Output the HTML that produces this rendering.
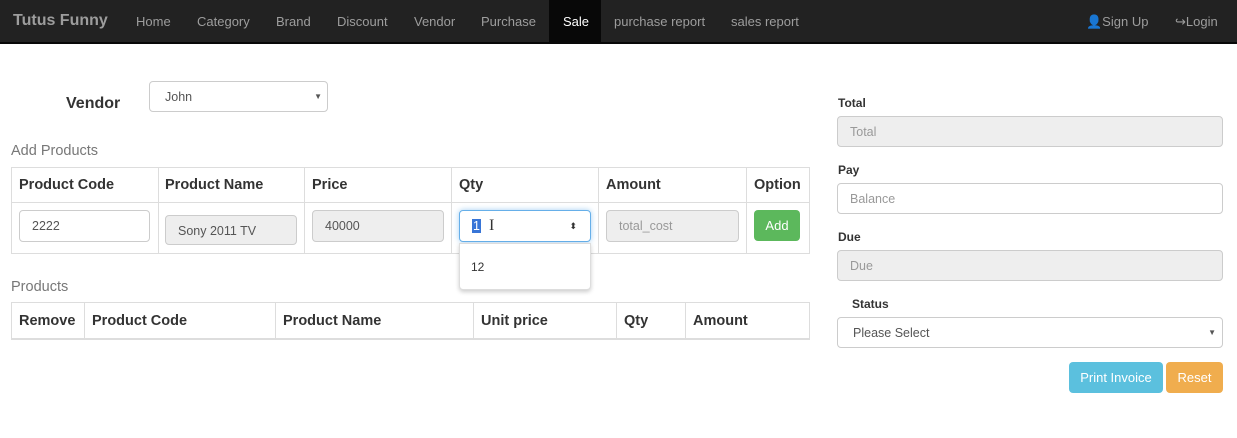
<!DOCTYPE html><html><head><style>
*{box-sizing:border-box;margin:0;padding:0}
body{width:1237px;height:438px;background:#fff;font-family:"Liberation Sans",sans-serif;font-size:13px;color:#333;position:relative;overflow:hidden}
.a{position:absolute}
.nav{left:0;top:0;width:1237px;height:44px;background:#222;border-bottom:2px solid #080808}
.nav span{position:absolute;top:14px;color:#9d9d9d;font-size:13px}
.in{position:absolute;height:32px;border:1px solid #ccc;border-radius:4px;background:#fff;padding:0 12px;line-height:30px;font-size:12.5px;color:#555}
.dis{background:#eee;color:#777}
.ph{color:#999}
.b{font-weight:bold;font-size:14.5px;color:#333}
.lbl{font-weight:bold;font-size:12px;color:#333}
.line{position:absolute;background:#ddd}
</style></head><body>
<div class="a nav">
<span style="left:13px;top:12px;font-size:16px;font-weight:bold;color:#9d9d9d">Tutus Funny</span>
<span style="left:136px">Home</span><span style="left:197px">Category</span><span style="left:276px">Brand</span><span style="left:337px">Discount</span><span style="left:414px">Vendor</span><span style="left:481px">Purchase</span>
<div class="a" style="left:549px;top:0;width:52px;height:42px;background:#080808"></div>
<span style="left:563px;color:#fff">Sale</span><span style="left:614px">purchase report</span><span style="left:731px">sales report</span>
<span style="left:1086px">&#128100;Sign Up</span><span style="left:1175px">&#8618;Login</span>
</div>
<div class="a" style="left:66px;top:95px;font-size:16px;font-weight:bold">Vendor</div>
<div class="in" style="left:149px;top:81px;width:179px;height:31px;padding-left:15px">John<span style="position:absolute;right:5px;font-size:8px">▼</span></div>
<div class="a" style="left:11px;top:143px;font-size:14.5px;color:#777">Add Products</div>
<div class="a" style="left:11px;top:167px;width:799px;height:87px;border:1px solid #ddd"></div>
<div class="line" style="left:11px;top:202px;width:799px;height:1px"></div>
<div class="line" style="left:158px;top:167px;width:1px;height:87px"></div>
<div class="line" style="left:304px;top:167px;width:1px;height:87px"></div>
<div class="line" style="left:451px;top:167px;width:1px;height:87px"></div>
<div class="line" style="left:598px;top:167px;width:1px;height:87px"></div>
<div class="line" style="left:746px;top:167px;width:1px;height:87px"></div>
<div class="a b" style="left:19px;top:177px">Product Code</div>
<div class="a b" style="left:165px;top:177px">Product Name</div>
<div class="a b" style="left:312px;top:177px">Price</div>
<div class="a b" style="left:459px;top:177px">Qty</div>
<div class="a b" style="left:606px;top:177px">Amount</div>
<div class="a b" style="left:754px;top:177px">Option</div>
<div class="in" style="left:19px;top:210px;width:131px">2222</div>
<div class="in dis" style="left:165px;top:215px;width:132px;height:30px;color:#555">Sony 2011 TV</div>
<div class="in dis" style="left:312px;top:210px;width:132px;color:#555">40000</div>
<div class="in" style="left:459px;top:210px;width:132px;border-color:#66afe9;box-shadow:0 0 6px rgba(102,175,233,.6)"><span style="background:#3875d7;color:#fff;padding:0 1px">1</span><span style="position:absolute;left:29px;color:#333;font-family:'Liberation Serif',serif;font-size:16px">I</span><span style="position:absolute;right:13px;font-size:9px;color:#333">⬍</span></div>
<div class="in dis ph" style="left:606px;top:210px;width:133px">total_cost</div>
<div class="a" style="left:754px;top:210px;width:46px;height:31px;background:#5cb85c;border-radius:4px;color:#fff;text-align:center;line-height:31px">Add</div>
<div class="a" style="left:459px;top:243px;width:132px;height:47px;background:#fff;border:1px solid #ddd;border-radius:0 0 4px 4px;box-shadow:0 2px 4px rgba(0,0,0,.2);font-size:12px;padding:16px 11px">12</div>
<div class="a" style="left:11px;top:279px;font-size:14.5px;color:#777">Products</div>
<div class="a" style="left:11px;top:302px;width:799px;height:38px;border:1px solid #ddd;border-bottom:2px solid #ddd"></div>
<div class="line" style="left:84px;top:302px;width:1px;height:38px"></div>
<div class="line" style="left:275px;top:302px;width:1px;height:38px"></div>
<div class="line" style="left:473px;top:302px;width:1px;height:38px"></div>
<div class="line" style="left:616px;top:302px;width:1px;height:38px"></div>
<div class="line" style="left:685px;top:302px;width:1px;height:38px"></div>
<div class="a b" style="left:19px;top:313px">Remove</div>
<div class="a b" style="left:92px;top:313px">Product Code</div>
<div class="a b" style="left:283px;top:313px">Product Name</div>
<div class="a b" style="left:481px;top:313px">Unit price</div>
<div class="a b" style="left:624px;top:313px">Qty</div>
<div class="a b" style="left:693px;top:313px">Amount</div>
<div class="a lbl" style="left:838px;top:96px">Total</div>
<div class="in dis ph" style="left:837px;top:116px;width:386px;height:31px">Total</div>
<div class="a lbl" style="left:838px;top:163px">Pay</div>
<div class="in ph" style="left:837px;top:183px;width:386px;height:31px">Balance</div>
<div class="a lbl" style="left:838px;top:230px">Due</div>
<div class="in dis ph" style="left:837px;top:250px;width:386px;height:31px">Due</div>
<div class="a lbl" style="left:852px;top:297px">Status</div>
<div class="in" style="left:837px;top:317px;width:386px;height:31px;padding-left:15px">Please Select<span style="position:absolute;right:6px;font-size:8px">▼</span></div>
<div class="a" style="left:1069px;top:362px;width:94px;height:31px;background:#5bc0de;border-radius:4px;color:#fff;text-align:center;line-height:31px">Print Invoice</div>
<div class="a" style="left:1166px;top:362px;width:57px;height:31px;background:#f0ad4e;border-radius:4px;color:#fff;text-align:center;line-height:31px">Reset</div>
</body></html>
